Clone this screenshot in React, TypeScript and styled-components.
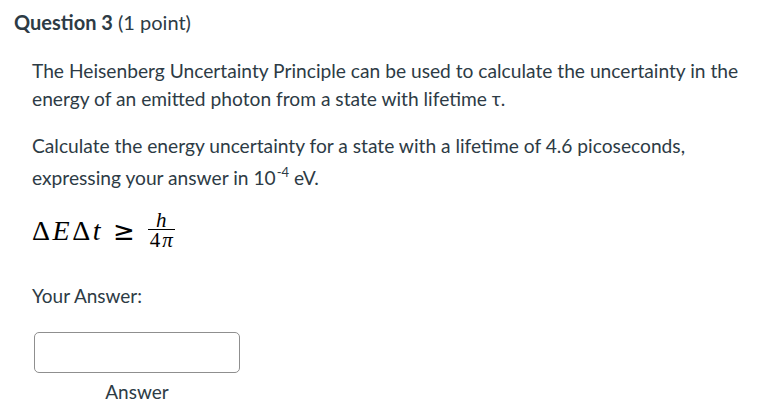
import { createGlobalStyle, styled } from 'styled-components';

const GlobalStyle = createGlobalStyle`
  html, body {
    margin: 0;
    padding: 0;
    background: #ffffff;
  }
  body {
    font-family: Lato, "Liberation Sans", sans-serif;
    color: #2d3b45;
  }
`;

const Page = styled.div`
  padding: 9px 6px 0 14px;
`;

const Header = styled.h2`
  margin: 0;
  font-size: 20px;
  line-height: 26px;
  font-weight: 400;
  color: #2d3b45;
`;

const Title = styled.span`
  font-weight: 700;
`;

const Body = styled.div`
  padding: 0 0 0 18px;
`;

const Paragraph = styled.p<{ $top: number }>`
  margin: ${(p) => p.$top}px 0 0 0;
  font-size: 19.2px;
  line-height: 28px;
`;

const Sup = styled.sup`
  font-size: 13px;
  line-height: 24px;
  vertical-align: 8px;
  margin-left: 1px;
`;

const Formula = styled.div`
  margin-top: 19px;
  height: 40px;
  display: flex;
  align-items: center;
  font-family: "Liberation Serif", "DejaVu Serif", serif;
  color: #000;
`;

const Expression = styled.span`
  font-size: 28px;
  letter-spacing: 2.5px;
`;

const Italic = styled.span`
  font-style: italic;
`;

const Relation = styled.span`
  font-family: "DejaVu Sans", sans-serif;
  font-size: 26px;
  margin: 0 13px 0 10px;
`;

const Fraction = styled.span`
  display: inline-flex;
  flex-direction: column;
  align-items: center;
  font-size: 21px;
`;

const Numerator = styled.span`
  font-style: italic;
  align-self: stretch;
  text-align: center;
  line-height: 15px;
  padding: 0 1px 1px;
  border-bottom: 1px solid #000;
`;

const Denominator = styled.span`
  line-height: 19px;
  letter-spacing: 2px;
  padding: 1px 0 0 2px;
`;

const Label = styled.div`
  margin-top: 33px;
  font-size: 19px;
  line-height: 24px;
`;

const AnswerBlock = styled.div`
  margin-top: 24px;
  margin-left: 2px;
  display: inline-flex;
  flex-direction: column;
  align-items: center;
`;

const AnswerInput = styled.input`
  box-sizing: border-box;
  width: 206px;
  height: 41px;
  border: 1px solid #8f8f8f;
  border-radius: 5px;
  padding: 0 8px;
  font-family: Lato, "Liberation Sans", sans-serif;
  font-size: 16px;
  outline: none;
`;

const AnswerCaption = styled.span`
  margin-top: 8px;
  font-size: 19px;
  line-height: 22px;
`;

export default function App() {
  return (
    <Page>
      <GlobalStyle />
      <Header>
        <Title>Question 3</Title> (1 point)
      </Header>
      <Body>
        <Paragraph $top={22}>
          The Heisenberg Uncertainty Principle can be used to calculate the uncertainty in the
          energy of an emitted photon from a state with lifetime τ.
        </Paragraph>
        <Paragraph $top={19}>
          Calculate the energy uncertainty for a state with a lifetime of 4.6 picoseconds,
          expressing your answer in 10<Sup>-4</Sup> eV.
        </Paragraph>
        <Formula>
          <Expression>
            Δ<Italic>E</Italic>Δ<Italic>t</Italic>
          </Expression>
          <Relation>≥</Relation>
          <Fraction>
            <Numerator>h</Numerator>
            <Denominator>
              4<Italic>π</Italic>
            </Denominator>
          </Fraction>
        </Formula>
        <Label>Your Answer:</Label>
        <AnswerBlock>
          <AnswerInput type="text" aria-label="Answer" />
          <AnswerCaption>Answer</AnswerCaption>
        </AnswerBlock>
      </Body>
    </Page>
  );
}
